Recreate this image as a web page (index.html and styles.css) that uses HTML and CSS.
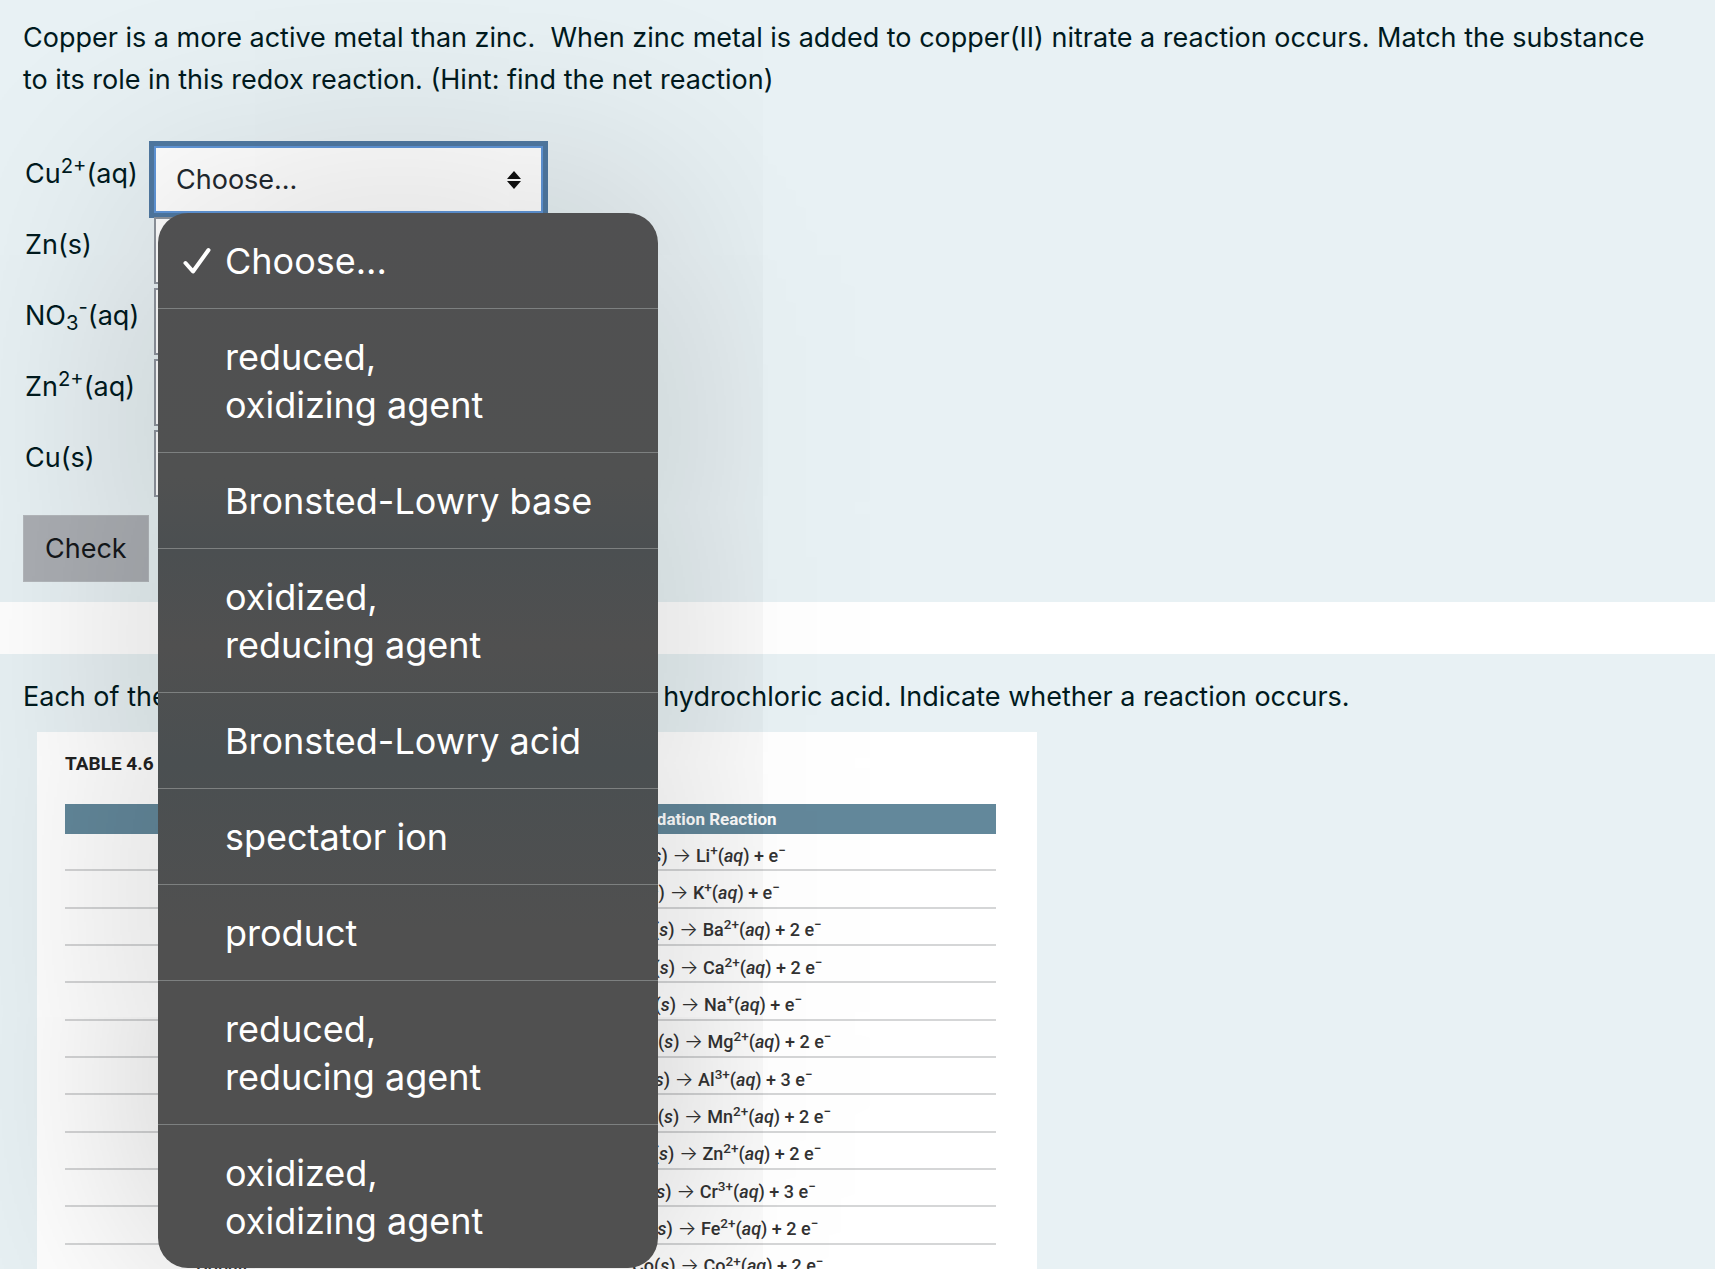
FILE: index.html
```
<!DOCTYPE html>
<html lang="en">

<head>
  <meta charset="UTF-8">
  <title>Quiz</title>
  <link rel="stylesheet" href="styles.css">
</head>

<body>
  <main class="quiz">
    <form class="question question-match">
      <p class="question-text">Copper is a more active metal than zinc.&nbsp; When zinc metal is added to copper(II) nitrate a reaction occurs. Match the substance to its role in this redox reaction. (Hint: find the net reaction)</p>

      <table class="answers">
        <tr>
          <td class="substance"><label for="sub1">Cu<sup>2+</sup>(aq)</label></td>
          <td class="control">
            <select id="sub1" class="choice choice-open"><option>Choose...</option></select>
            <!-- Open option list -->
            <div class="menu">
              <button type="button" class="menu-item">
                <svg class="check" viewBox="0 0 28 28" aria-hidden="true"><path d="M2.5 16 L10 24.5 L25.5 3" /></svg>
                Choose...
              </button>
              <button type="button" class="menu-item">reduced,<br>oxidizing agent</button>
              <button type="button" class="menu-item">Bronsted-Lowry base</button>
              <button type="button" class="menu-item">oxidized,<br>reducing agent</button>
              <button type="button" class="menu-item">Bronsted-Lowry acid</button>
              <button type="button" class="menu-item">spectator ion</button>
              <button type="button" class="menu-item">product</button>
              <button type="button" class="menu-item">reduced,<br>reducing agent</button>
              <button type="button" class="menu-item">oxidized,<br>oxidizing agent</button>
            </div>
          </td>
        </tr>
        <tr>
          <td class="substance"><label for="sub2">Zn(s)</label></td>
          <td class="control"><select id="sub2" class="choice"><option>Choose...</option></select></td>
        </tr>
        <tr>
          <td class="substance"><label for="sub3">NO<sub>3</sub><sup>-</sup>(aq)</label></td>
          <td class="control"><select id="sub3" class="choice"><option>Choose...</option></select></td>
        </tr>
        <tr>
          <td class="substance"><label for="sub4">Zn<sup>2+</sup>(aq)</label></td>
          <td class="control"><select id="sub4" class="choice"><option>Choose...</option></select></td>
        </tr>
        <tr>
          <td class="substance"><label for="sub5">Cu(s)</label></td>
          <td class="control"><select id="sub5" class="choice"><option>Choose...</option></select></td>
        </tr>
      </table>

      <button type="button" class="check-button">Check</button>
    </form>

    <section class="question question-series">
      <p class="question-text">Each of the following metals is being reacted with hydrochloric acid. Indicate whether a reaction occurs.</p>

      <div class="figure">
        <h2 class="figure-title">TABLE 4.6</h2>
        <table class="series">
          <thead>
            <tr><th class="metal">Metal</th><th>Oxidation Reaction</th></tr>
          </thead>
          <tbody>
            <tr><td class="metal">Lithium</td><td>Li(<i>s</i>) <span class="arrow">→</span> Li<sup>+</sup>(<i>aq</i>) + e<sup>−</sup></td></tr>
            <tr><td class="metal">Potassium</td><td>K(<i>s</i>) <span class="arrow">→</span> K<sup>+</sup>(<i>aq</i>) + e<sup>−</sup></td></tr>
            <tr><td class="metal">Barium</td><td>Ba(<i>s</i>) <span class="arrow">→</span> Ba<sup>2+</sup>(<i>aq</i>) + 2 e<sup>−</sup></td></tr>
            <tr><td class="metal">Calcium</td><td>Ca(<i>s</i>) <span class="arrow">→</span> Ca<sup>2+</sup>(<i>aq</i>) + 2 e<sup>−</sup></td></tr>
            <tr><td class="metal">Sodium</td><td>Na(<i>s</i>) <span class="arrow">→</span> Na<sup>+</sup>(<i>aq</i>) + e<sup>−</sup></td></tr>
            <tr><td class="metal">Magnesium</td><td>Mg(<i>s</i>) <span class="arrow">→</span> Mg<sup>2+</sup>(<i>aq</i>) + 2 e<sup>−</sup></td></tr>
            <tr><td class="metal">Aluminum</td><td>Al(<i>s</i>) <span class="arrow">→</span> Al<sup>3+</sup>(<i>aq</i>) + 3 e<sup>−</sup></td></tr>
            <tr><td class="metal">Manganese</td><td>Mn(<i>s</i>) <span class="arrow">→</span> Mn<sup>2+</sup>(<i>aq</i>) + 2 e<sup>−</sup></td></tr>
            <tr><td class="metal">Zinc</td><td>Zn(<i>s</i>) <span class="arrow">→</span> Zn<sup>2+</sup>(<i>aq</i>) + 2 e<sup>−</sup></td></tr>
            <tr><td class="metal">Chromium</td><td>Cr(<i>s</i>) <span class="arrow">→</span> Cr<sup>3+</sup>(<i>aq</i>) + 3 e<sup>−</sup></td></tr>
            <tr><td class="metal">Iron</td><td>Fe(<i>s</i>) <span class="arrow">→</span> Fe<sup>2+</sup>(<i>aq</i>) + 2 e<sup>−</sup></td></tr>
            <tr><td class="metal">Cobalt</td><td>Co(<i>s</i>) <span class="arrow">→</span> Co<sup>2+</sup>(<i>aq</i>) + 2 e<sup>−</sup></td></tr>
          </tbody>
        </table>
      </div>
    </section>
  </main>
</body>

</html>
```
FILE: styles.css
```
* {
  box-sizing: border-box;
}

body {
  margin: 0;
  height: 100vh;
  overflow: hidden;
  background: #fff;
  color: #001a1e;
  font-family: Inter, "Liberation Sans", sans-serif;
  font-size: 27px;
  line-height: 42px;
}

.quiz {
  display: flex;
  flex-direction: column;
  gap: 52px;
  padding-right: 14px;
}

.question {
  background: #e8f1f4;
  padding: 22px 23px 20px;
}

.question-match {
  padding-top: 17px;
}

.question-text {
  margin: 0;
  padding-right: 24px;
}

sup,
sub {
  position: relative;
  font-size: 75%;
  line-height: 0;
  vertical-align: baseline;
}

sup {
  top: -0.5em;
}

sub {
  bottom: -0.25em;
}

/* Matching question */
.answers {
  margin: 41px 0 14px;
  border-spacing: 0 4px;
}

.answers td {
  padding: 0;
  vertical-align: top;
}

.answers .substance {
  width: 131px;
  padding: 7px 0 0 2px;
  white-space: nowrap;
}

.answers .control {
  position: relative;
}

.choice {
  display: block;
  width: 389px;
  height: 67px;
  padding: 0 20px;
  border: 2px solid #8f959e;
  border-radius: 0;
  appearance: none;
  background: #fff url("data:image/svg+xml,%3Csvg xmlns='http://www.w3.org/2000/svg' viewBox='0 0 14 18'%3E%3Cpath d='M7 0L14 8H0zM7 18L0 10H14z' fill='%23111'/%3E%3C/svg%3E") no-repeat right 20px center / 14px 18px;
  color: #22292f;
  font: inherit;
}

.choice-open {
  border-color: #6096d8;
  outline: 5px solid #5079a2;
}

.menu {
  position: absolute;
  top: 67px;
  left: 4px;
  z-index: 1;
  width: 500px;
  overflow: hidden;
  border-radius: 30px;
  background: linear-gradient(#505051, #505151 25%, #4b4f51 32%, #505050 41%, #4a4f51 52%, #505050 68%, #505050);
  box-shadow: 0 0 240px rgba(0, 0, 0, 0.24);
}

.menu-item {
  position: relative;
  display: block;
  width: 100%;
  padding: 24px 24px 23px 67px;
  border: 0;
  border-bottom: 1px solid #7d8080;
  background: none;
  color: #fff;
  font: inherit;
  font-size: 36px;
  line-height: 48px;
  text-align: left;
}

.menu-item:last-child {
  border-bottom: 0;
}

.check {
  position: absolute;
  top: 34px;
  left: 25px;
  width: 28px;
  height: 28px;
  fill: none;
  stroke: #fff;
  stroke-width: 4;
  stroke-linecap: round;
  stroke-linejoin: round;
}

.check-button {
  display: block;
  height: 67px;
  padding: 0 21px;
  border: 1px solid #b4b8bc;
  background: #abaeb3;
  color: #15181b;
  font: inherit;
}

/* Activity series */
.figure {
  max-width: 1000px;
  margin: 14px 0 0 14px;
  padding: 20px 41px 28px 28px;
  background: #fff;
  color: #333;
  font-family: Roboto, "Liberation Sans", sans-serif;
  font-size: 18px;
  line-height: 24px;
}

.figure-title {
  margin: 0 0 28px;
  color: #222;
  font-size: 19px;
}

.series {
  width: 100%;
  height: 478px;
  border-collapse: collapse;
}

.series th {
  height: 30px;
  padding: 0;
  background: #63889b;
  color: #fff;
  font-size: 17px;
  text-align: left;
}

.series td {
  padding: 8px 0 0;
  border-bottom: 2px solid #d5d6d7;
  font-weight: 500;
}

.series .metal {
  width: 567px;
  padding-left: 131px;
}

.arrow {
  font-family: Inter, "DejaVu Sans", sans-serif;
  font-size: 20px;
  font-weight: 300;
  line-height: 18px;
}
```
